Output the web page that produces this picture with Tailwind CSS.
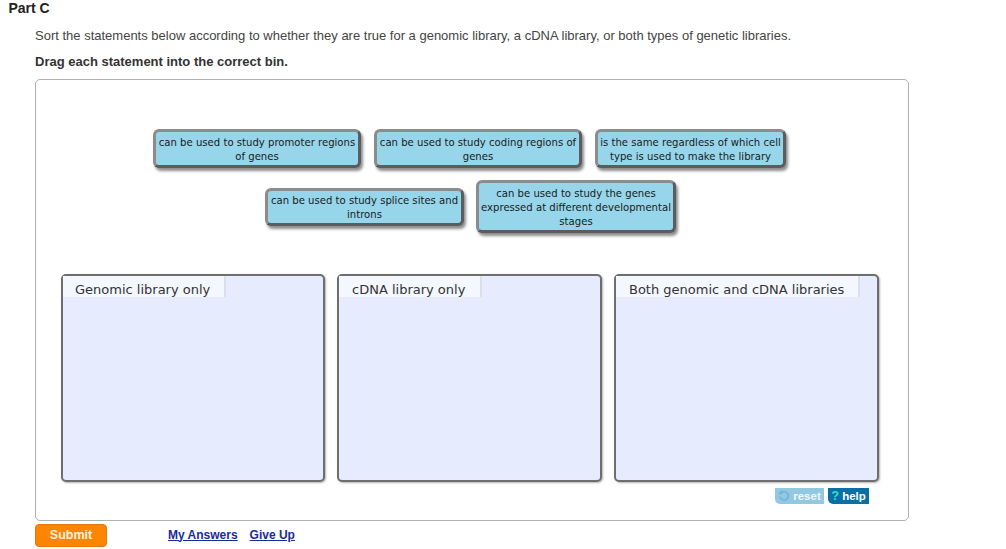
<!DOCTYPE html>
<html lang="en">
<head>
  <meta charset="UTF-8" />
  <title>Part C</title>
  <script src="https://cdn.jsdelivr.net/npm/@tailwindcss/browser@4"></script>
</head>
<body class="bg-white font-['Liberation_Sans',Arial,sans-serif] text-[#333] overflow-hidden">
  <div class="h-[549px] w-[1006px] relative">
    <h2 class="pl-[8.5px] pt-[0px] text-[14px] leading-[16px] font-bold text-[#222]">Part C</h2>

    <div class="pl-[35px] w-[909px]">
      <p class="mt-[12px] text-[13px] leading-[15px] text-[#444]">Sort the statements below according to whether they are true for a genomic library, a cDNA library, or both types of genetic libraries.</p>
      <p class="mt-[11px] text-[13px] leading-[15px] font-bold text-[#333]">Drag each statement into the correct bin.</p>

      <!-- drag area -->
      <div class="mt-[10px] h-[442px] border border-[#b0b0b0] rounded-[5px] pt-[49px] px-[25px] font-['DejaVu_Sans',sans-serif]">
        <div class="flex gap-[13px] pl-[92px] text-[10.1px] leading-[14px] text-[#1a1a1a] text-center">
          <div class="w-[208px] h-[39px] pt-[3px] flex items-center justify-center bg-[#97d6ea] border-[3px] border-t-[#8c8c8c] border-l-[#8c8c8c] border-r-[#5c5c5c] border-b-[#5c5c5c] rounded-[6px] shadow-[2px_3px_3px_rgba(0,0,0,0.45)]">can be used to study promoter regions of genes</div>
          <div class="w-[208px] h-[39px] pt-[3px] flex items-center justify-center bg-[#97d6ea] border-[3px] border-t-[#8c8c8c] border-l-[#8c8c8c] border-r-[#5c5c5c] border-b-[#5c5c5c] rounded-[6px] shadow-[2px_3px_3px_rgba(0,0,0,0.45)]">can be used to study coding regions of genes</div>
          <div class="w-[191px] h-[39px] pt-[3px] flex items-center justify-center bg-[#97d6ea] border-[3px] border-t-[#8c8c8c] border-l-[#8c8c8c] border-r-[#5c5c5c] border-b-[#5c5c5c] rounded-[6px] shadow-[2px_3px_3px_rgba(0,0,0,0.45)]">is the same regardless of which cell type is used to make the library</div>
        </div>
        <div class="flex items-end gap-[12px] mt-[12px] pl-[204px] text-[10.1px] leading-[14px] text-[#1a1a1a] text-center">
          <div class="w-[199px] h-[38px] pt-[1px] mb-[7px] flex items-center justify-center bg-[#97d6ea] border-[3px] border-t-[#8c8c8c] border-l-[#8c8c8c] border-r-[#5c5c5c] border-b-[#5c5c5c] rounded-[6px] shadow-[2px_3px_3px_rgba(0,0,0,0.45)]">can be used to study splice sites and introns</div>
          <div class="w-[200px] h-[53px] pt-[3px] flex items-center justify-center bg-[#97d6ea] border-[3px] border-t-[#8c8c8c] border-l-[#8c8c8c] border-r-[#5c5c5c] border-b-[#5c5c5c] rounded-[6px] shadow-[2px_3px_3px_rgba(0,0,0,0.45)]">can be used to study the genes expressed at different developmental stages</div>
        </div>

        <!-- bins -->
        <div class="grid grid-cols-[264px_265px_265px] gap-[12px] mt-[41px] w-[818px] text-[13px] leading-[16px] text-[#333]">
          <div class="h-[208px] bg-[#e6ecfd] border-2 border-[#6e6e6e] rounded-[5px] shadow-[1px_1px_2px_rgba(0,0,0,0.3)]">
            <div class="h-[21px] w-[163px] pl-[12px] pt-[6px] bg-[#f5f7fe] border-r-2 border-[#dcdfe8]">Genomic library only</div>
          </div>
          <div class="h-[208px] bg-[#e6ecfd] border-2 border-[#6e6e6e] rounded-[5px] shadow-[1px_1px_2px_rgba(0,0,0,0.3)]">
            <div class="h-[21px] w-[143px] pl-[13px] pt-[6px] bg-[#f5f7fe] border-r-2 border-[#dcdfe8]">cDNA library only</div>
          </div>
          <div class="h-[208px] bg-[#e6ecfd] border-2 border-[#6e6e6e] rounded-[5px] shadow-[1px_1px_2px_rgba(0,0,0,0.3)]">
            <div class="h-[21px] w-[244px] pl-[13px] pt-[6px] bg-[#f5f7fe] border-r-2 border-[#dcdfe8]">Both genomic and cDNA libraries</div>
          </div>
        </div>

        <!-- reset / help -->
        <div class="flex justify-end gap-[4px] mt-[6px] w-[808px] font-['Liberation_Sans',sans-serif] text-[11.5px] leading-[16px] font-bold text-[#eef7fb]">
          <div class="h-[16px] w-[49px] flex items-center justify-center gap-[3px] bg-[#93c8e2] rounded-bl-[5px]">
            <svg width="12" height="12" viewBox="0 0 12 12" fill="none" stroke="#6db4dc" stroke-width="1.6"><path d="M3.2 3A4.2 4.2 0 1 1 2 6.5"/><path d="M3.4 0.6V3.4H0.8"/></svg>
            <span>reset</span>
          </div>
          <div class="h-[16px] w-[41px] flex items-center justify-center gap-[3px] bg-[#0a6fa6] rounded-bl-[5px] text-white">
            <span class="text-[#2fe0c0] text-[13px]">?</span>
            <span>help</span>
          </div>
        </div>
      </div>

      <!-- actions -->
      <div class="flex items-center mt-[3px] text-[12px] font-bold">
        <button class="w-[72px] h-[23px] bg-[#ff8500] border border-[#e07a10] rounded-[4px] text-[12.5px] text-[#fff2df]">Submit</button>
        <a class="ml-[61px] mb-[2px] text-[#1a2a9a] underline" href="#">My Answers</a>
        <a class="ml-[12px] mb-[2px] text-[#1a2a9a] underline" href="#">Give Up</a>
      </div>
    </div>
  </div>
</body>
</html>
